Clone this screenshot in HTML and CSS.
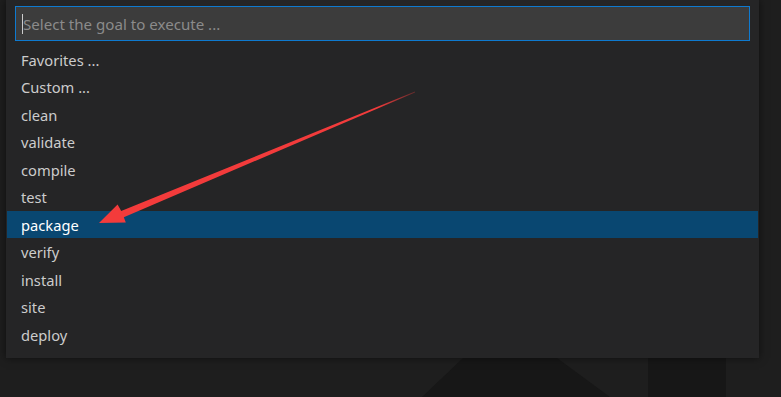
FILE: index.html
```html
<!DOCTYPE html>
<html>
<head>
<meta charset="utf-8">
<link rel="stylesheet" href="styles.css">
</head>
<body>
<div class="watermark">
  <div class="wm-trap"></div>
  <div class="wm-rect"></div>
</div>
<div class="quickpick">
  <div class="input-wrap">
    <div class="input"><span class="caret"></span><span class="placeholder">Select the goal to execute ...</span></div>
  </div>
  <ul class="list">
    <li class="row">Favorites ...</li>
    <li class="row">Custom ...</li>
    <li class="row">clean</li>
    <li class="row">validate</li>
    <li class="row">compile</li>
    <li class="row">test</li>
    <li class="row selected">package</li>
    <li class="row">verify</li>
    <li class="row">install</li>
    <li class="row">site</li>
    <li class="row">deploy</li>
  </ul>
</div>
<svg class="arrow" width="781" height="397" viewBox="0 0 781 397">
  <defs>
    <linearGradient id="fade" x1="415" y1="92" x2="99" y2="223" gradientUnits="userSpaceOnUse">
      <stop offset="0" stop-color="#f33b3b" stop-opacity="0.3"/>
      <stop offset="0.12" stop-color="#f33b3b" stop-opacity="1"/>
      <stop offset="1" stop-color="#f33b3b"/>
    </linearGradient>
  </defs>
  <polygon fill="url(#fade)" points="415,91.5 121.2,211 117.6,204.4 99,223 125.8,222.6 123.8,217.2 415,92.5"/>
</svg>
</body>
</html>
```
FILE: styles.css
```css
html, body {
  margin: 0;
  padding: 0;
}
body {
  width: 781px;
  height: 397px;
  background: #1e1e1e;
  overflow: hidden;
  position: relative;
  font-family: "Noto Sans", "Open Sans", sans-serif;
}
.watermark {
  position: absolute;
  left: 0;
  top: 0;
  width: 781px;
  height: 397px;
}
.wm-trap {
  position: absolute;
  left: 400px;
  top: 270px;
  width: 270px;
  height: 127px;
  background: #171717;
  clip-path: polygon(63px 88px, 157px 88px, 210px 127px, 22px 127px);
}
.wm-rect {
  position: absolute;
  left: 648px;
  top: 300px;
  width: 78px;
  height: 97px;
  background: #171717;
}
.quickpick {
  position: relative;
  z-index: 2;
  margin-left: 6px;
  width: 753px;
  height: 358px;
  background: #252526;
  box-shadow: 0 0 8px rgba(0, 0, 0, 0.55);
  box-sizing: border-box;
  padding-top: 6px;
}
.input-wrap {
  padding: 0 9px;
}
.input {
  height: 35px;
  box-sizing: border-box;
  background: #3c3c3c;
  border: 1px solid #0e7ad0;
  display: flex;
  align-items: center;
  padding-left: 6px;
  font-size: 15.1px;
  color: #8b8b8b;
}
.caret {
  width: 1px;
  height: 20px;
  background: #cccccc;
  margin-right: 0;
}
.placeholder {
  white-space: nowrap;
}
.list {
  list-style: none;
  margin: 4.7px 1px 0;
  padding: 0;
}
.row {
  height: 27.5px;
  line-height: 29px;
  padding-left: 14px;
  font-size: 14.7px;
  color: #cccccc;
}
.row.selected {
  background: #094771;
  color: #ffffff;
}
.arrow {
  position: absolute;
  left: 0;
  top: 0;
  z-index: 3;
  pointer-events: none;
}
```
